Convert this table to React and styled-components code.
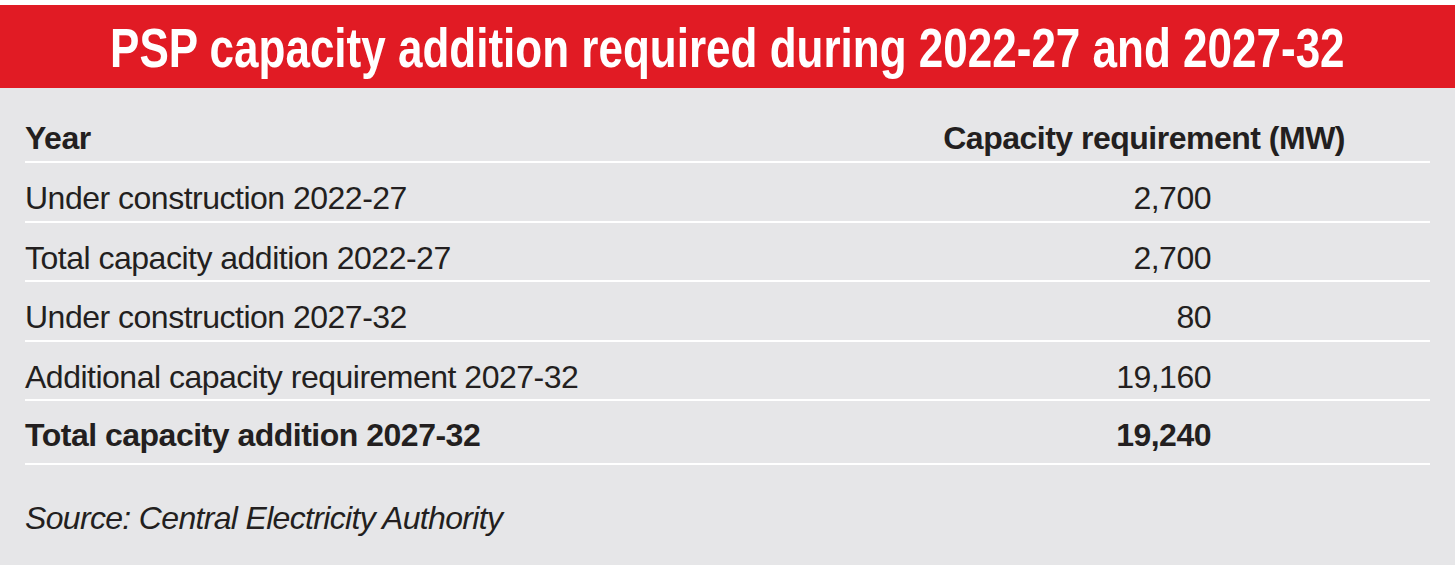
import React from "react";
import styled, { createGlobalStyle } from "styled-components";

const rows = [
  { label: "Under construction 2022-27", value: "2,700" },
  { label: "Total capacity addition 2022-27", value: "2,700" },
  { label: "Under construction 2027-32", value: "80" },
  { label: "Additional capacity requirement 2027-32", value: "19,160" },
];

const App = () => {
  return (
    <>
      <GlobalStyle />
      <Page>
        <Banner>
          <Title>PSP capacity addition required during 2022-27 and 2027-32</Title>
        </Banner>
        <Panel>
          <HeadRow>
            <Label $bold>Year</Label>
            <Value $bold $head>
              Capacity requirement (MW)
            </Value>
          </HeadRow>
          {rows.map((r) => (
            <Row key={r.label}>
              <Label>{r.label}</Label>
              <Value>{r.value}</Value>
            </Row>
          ))}
          <TotalRow>
            <Label $bold>Total capacity addition 2027-32</Label>
            <Value $bold>19,240</Value>
          </TotalRow>
          <Source>Source: Central Electricity Authority</Source>
        </Panel>
      </Page>
    </>
  );
};

const GlobalStyle = createGlobalStyle`
  body {
    margin: 0;
    background: #ffffff;
    font-family: "Liberation Sans", Arial, sans-serif;
    color: #231f20;
  }
`;

const Page = styled.div`
  width: 1455px;
  padding-top: 5px;
`;

const Banner = styled.div`
  display: flex;
  justify-content: center;
  align-items: flex-start;
  background: #e11b24;
  height: 83px;
  box-sizing: border-box;
  padding-top: 15px;
  overflow: hidden;
`;

const Title = styled.h1`
  flex: none;
  margin: 0;
  font-family: "Liberation Sans", Arial, sans-serif;
  font-weight: 700;
  font-size: 56px;
  line-height: 56px;
  color: #ffffff;
  white-space: nowrap;
  transform: scaleX(0.786);
  transform-origin: center;
`;

const Panel = styled.div`
  background: #e6e6e8;
  height: 477px;
  box-sizing: border-box;
  padding: 0 25px 0 25px;
`;

const Row = styled.div`
  display: flex;
  justify-content: space-between;
  align-items: flex-start;
  padding: 19px 0 6.5px;
  border-bottom: 2px solid #ffffff;
  font-size: 32px;
  line-height: 32px;
  letter-spacing: -0.5px;
`;

const HeadRow = styled(Row)`
  padding: 33.5px 0 7.5px;
`;

const TotalRow = styled(Row)`
  padding: 17.5px 0 12.5px;
`;

const Label = styled.span`
  font-weight: ${(p) => (p.$bold ? 700 : 400)};
`;

const Value = styled.span`
  font-weight: ${(p) => (p.$bold ? 700 : 400)};
  padding-right: ${(p) => (p.$head ? "85px" : "219px")};
  text-align: right;
`;

const Source = styled.p`
  margin: 36.5px 0 0;
  font-size: 32px;
  line-height: 32px;
  font-style: italic;
  letter-spacing: -0.67px;
`;

export default App;
